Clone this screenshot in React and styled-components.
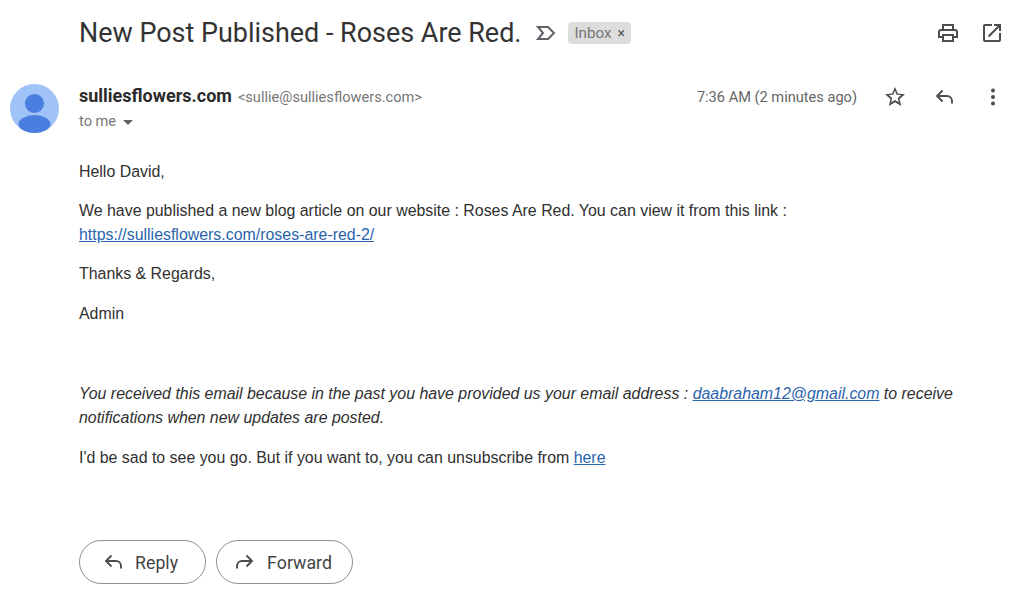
import React from "react";
import styled, { createGlobalStyle } from "styled-components";

const Global = createGlobalStyle`
  html, body { margin: 0; background: #fff; }
  body { width: 1024px; height: 593px; overflow: hidden; font-family: "Liberation Sans", Arial, sans-serif; color: #222; }
`;

const Page = styled.div`
  display: flex;
  flex-direction: column;
  padding: 0 20px 0 10px;
`;

const SubjectRow = styled.div`
  display: flex;
  align-items: center;
  height: 66px;
  padding-left: 69px;
`;

const Subject = styled.h1`
  margin: 0;
  font: 400 26.95px "Roboto", sans-serif;
  color: #333;
`;

const LabelIcon = styled.svg`
  width: 22px;
  height: 16px;
  margin-left: 14px;
  fill: none;
  stroke: #5f6368;
  stroke-width: 2;
`;

const Chip = styled.span`
  display: flex;
  align-items: center;
  gap: 6px;
  height: 22px;
  margin-left: 11px;
  padding: 0 6px;
  border-radius: 4px;
  background: #dddddd;
  color: #777;
  font: 400 15.2px "Roboto", sans-serif;
`;

const ChipClose = styled.span`
  font-size: 14px;
  color: #555;
`;

const TopActions = styled.div`
  display: flex;
  gap: 20px;
  margin-left: auto;
`;

const IconSvg = styled.svg`
  width: 24px;
  height: 24px;
  fill: #4d4d4d;
  display: block;
`;

const ArrowSvg = styled.svg`
  width: 24px;
  height: 24px;
  display: block;
  fill: none;
  stroke: #4d4d4d;
  stroke-width: 1.9;
`;

const Header = styled.div`
  display: flex;
  margin-top: 18px;
`;

const Avatar = styled.svg`
  width: 49px;
  height: 49px;
  flex: none;
`;

const Sender = styled.div`
  margin-left: 20px;
  flex: 1;
`;

const SenderLine = styled.div`
  display: flex;
  align-items: baseline;
  gap: 6px;
  height: 24px;
  padding-top: 1px;
`;

const SenderName = styled.span`
  font: 700 18px "Roboto", sans-serif;
  color: #2a2a2a;
`;

const SenderMail = styled.span`
  font: 400 14.6px "Roboto", sans-serif;
  color: #777;
`;

const ToLine = styled.div`
  display: flex;
  align-items: center;
  gap: 6px;
  margin-top: 3px;
  font: 400 14.6px "Roboto", sans-serif;
  color: #777;
`;

const Caret = styled.span`
  width: 0;
  height: 0;
  margin-top: 2px;
  margin-left: 1px;
  border-left: 5px solid transparent;
  border-right: 5px solid transparent;
  border-top: 5px solid #5f6368;
`;

const Meta = styled.div`
  display: flex;
  align-items: center;
  height: 26px;
`;

const Time = styled.span`
  font: 400 14.6px "Roboto", sans-serif;
  color: #666;
  margin-right: 26px;
`;

const MetaIcons = styled.div`
  display: flex;
  gap: 25px;
  margin-right: -1px;
`;

const Body = styled.div`
  padding-left: 69px;
  margin-top: 27px;
  font-size: 15.92px;
  line-height: 24px;
  color: #303030;
`;

const Para = styled.p`
  margin: 0 0 ${p => p.$gap ?? 16}px;
  font-style: ${p => (p.$italic ? "italic" : "normal")};
`;

const Link = styled.a`
  color: #2a63ad;
  text-decoration: underline;
`;

const Buttons = styled.div`
  display: flex;
  gap: 10px;
  padding-left: 69px;
  margin-top: 70px;
`;

const PillButton = styled.button`
  display: flex;
  align-items: center;
  gap: 10px;
  height: 44px;
  padding: 0 ${p => p.$right}px 0 ${p => p.$left}px;
  border: 1px solid #8f9090;
  border-radius: 22px;
  background: #fff;
  font: 400 17.8px "Roboto", sans-serif;
  color: #444;
`;

const ReplyArrow = () => (
  <ArrowSvg viewBox="0 0 24 24">
    <path d="M20 18.5v-2.5a5 5 0 0 0-5-5H5M10.5 5.5L5 11l5.5 5.5" />
  </ArrowSvg>
);

const ForwardArrow = () => (
  <ArrowSvg viewBox="0 0 24 24">
    <path d="M4 18.5v-2.5a5 5 0 0 1 5-5h10M13.5 5.5L19 11l-5.5 5.5" />
  </ArrowSvg>
);

export default function App() {
  return (
    <>
      <Global />
      <Page>
        <SubjectRow>
          <Subject>New Post Published - Roses Are Red.</Subject>
          <LabelIcon viewBox="0 0 22 16">
            <path d="M3 2h10l6 6-6 6H3l5-6z" />
          </LabelIcon>
          <Chip>
            Inbox<ChipClose>×</ChipClose>
          </Chip>
          <TopActions>
            <IconSvg viewBox="0 0 24 24">
              <path d="M19 8h-1V3H6v5H5a3 3 0 0 0-3 3v6h4v4h12v-4h4v-6a3 3 0 0 0-3-3zM8 5h8v3H8zm8 14H8v-4h8zm4-4h-2v-2H6v2H4v-4a1 1 0 0 1 1-1h14a1 1 0 0 1 1 1z" />
            </IconSvg>
            <IconSvg viewBox="0 0 24 24">
              <path d="M19 19H5V5h7V3H5a2 2 0 0 0-2 2v14a2 2 0 0 0 2 2h14a2 2 0 0 0 2-2v-7h-2zM14 3v2h3.6l-9.8 9.8 1.4 1.4L19 6.4V10h2V3z" />
            </IconSvg>
          </TopActions>
        </SubjectRow>

        <Header>
          <Avatar viewBox="0 0 49 49">
            <circle cx="24.5" cy="24.5" r="24.5" fill="#a0c3f7" />
            <circle cx="24.5" cy="19.5" r="9.5" fill="#4a7fe0" />
            <ellipse cx="24.5" cy="40" rx="16" ry="9" fill="#4a7fe0" />
          </Avatar>
          <Sender>
            <SenderLine>
              <SenderName>sulliesflowers.com</SenderName>
              <SenderMail>&lt;sullie@sulliesflowers.com&gt;</SenderMail>
            </SenderLine>
            <ToLine>
              to me <Caret />
            </ToLine>
          </Sender>
          <Meta>
            <Time>7:36 AM (2 minutes ago)</Time>
            <MetaIcons>
              <IconSvg viewBox="0 0 24 24">
                <path d="M22 9.2l-7.2-.6L12 2 9.2 8.6 2 9.2l5.5 4.7L5.8 21l6.2-3.7 6.2 3.7-1.6-7.1zM12 15l-3.8 2.3 1-4.3-3.3-2.9 4.4-.4L12 5.7l1.7 4 4.4.4-3.3 2.9 1 4.3z" />
              </IconSvg>
              <ReplyArrow />
              <IconSvg viewBox="0 0 24 24">
                <circle cx="12" cy="5.5" r="2" />
                <circle cx="12" cy="12" r="2" />
                <circle cx="12" cy="18.5" r="2" />
              </IconSvg>
            </MetaIcons>
          </Meta>
        </Header>

        <Body>
          <Para $gap={15}>Hello David,</Para>
          <Para $gap={15}>
            We have published a new blog article on our website : Roses Are Red. You can view it from this link :
            <br />
            <Link href="#">https://sulliesflowers.com/roses-are-red-2/</Link>
          </Para>
          <Para>Thanks &amp; Regards,</Para>
          <Para $gap={56}>Admin</Para>
          <Para $italic>
            You received this email because in the past you have provided us your email address :{" "}
            <Link href="#">daabraham12@gmail.com</Link> to receive
            <br />
            notifications when new updates are posted.
          </Para>
          <Para $gap={0}>
            I'd be sad to see you go. But if you want to, you can unsubscribe from <Link href="#">here</Link>
          </Para>
        </Body>

        <Buttons>
          <PillButton $left={21} $right={27}>
            <ReplyArrow />
            Reply
          </PillButton>
          <PillButton $left={16} $right={20}>
            <ForwardArrow />
            Forward
          </PillButton>
        </Buttons>
      </Page>
    </>
  );
}
